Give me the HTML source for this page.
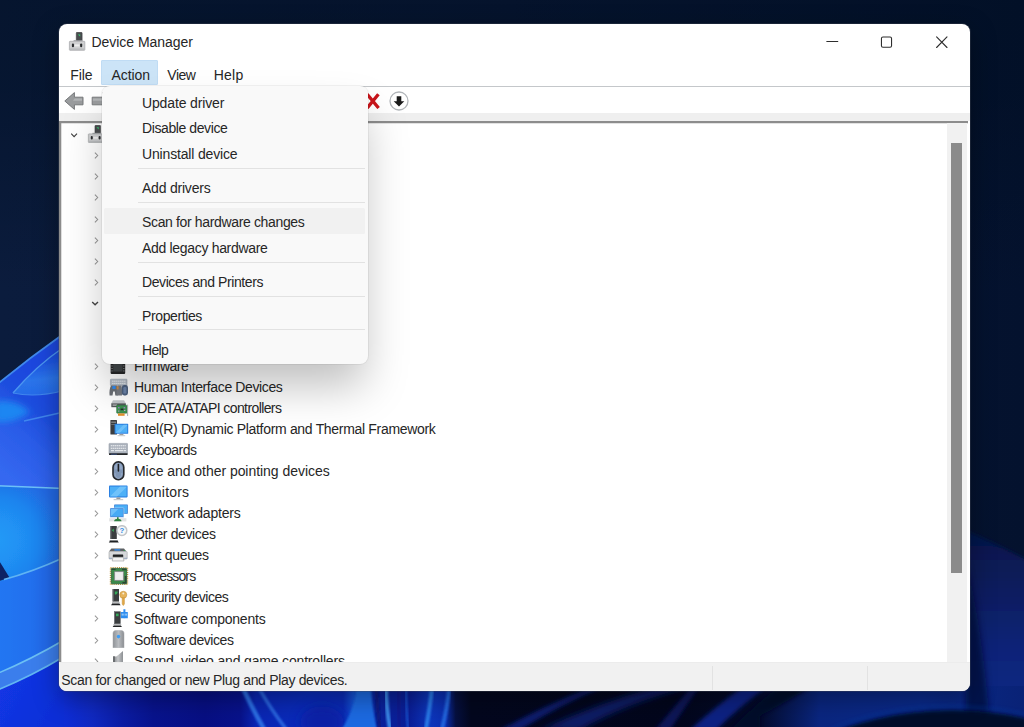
<!DOCTYPE html>
<html lang="en">
<head>
<meta charset="utf-8">
<title>Device Manager</title>
<style>
*{box-sizing:border-box;margin:0;padding:0}
html,body{width:1024px;height:727px;overflow:hidden;background:#081230}
body{font-family:"Liberation Sans",sans-serif;font-size:14px;color:#262626;position:relative}
svg{display:block}
#wall{position:absolute;left:0;top:0;width:1024px;height:727px}
#win{position:absolute;left:59px;top:24px;width:911px;height:667px;background:#fff;border-radius:8px;overflow:hidden;box-shadow:0 0 0 1px rgba(70,75,90,.35),0 8px 26px rgba(0,0,0,.34)}
#title{position:absolute;left:0;top:0;width:100%;height:36px}
#title .ticon{position:absolute}
#title .cap{position:absolute;top:9px;line-height:18px;color:#262626;white-space:nowrap}
#title .capbtn{position:absolute}
#menubar{position:absolute;left:0;top:36px;width:100%;height:26px}
#menubar span{position:absolute;top:6px;line-height:18px;white-space:nowrap;color:#262626}
#menubar .hot{position:absolute;left:42px;top:0;width:57px;height:25px;background:#cce4f7;border:1px solid #c0dcf4;border-radius:1px}
#tbline{position:absolute;left:0;top:62px;width:100%;height:1px;background:#c4c7ca}
#toolbar{position:absolute;left:0;top:63px;width:100%;height:26px;background:#fff}
#toolbar svg{position:absolute}
#band{position:absolute;left:0;top:89px;width:100%;height:8px;background:#efefef}
#tree{position:absolute;left:0;top:96.7px;width:908.5px;height:541.3px;background:#fff;overflow:hidden;box-shadow:inset 2px 2.3px 0 #8c8c8c,inset 2.6px 0 0 #c8c8c8}
.row{position:absolute;left:0;height:21px;width:880px;white-space:nowrap}
.row .chev{position:absolute;top:0}
.row .ico{position:absolute;top:1.5px;width:20px;height:18px}
.row .lbl{position:absolute;top:1.8px;line-height:19px;font-size:14px;color:#262626}
#vscroll{position:absolute;left:888.2px;top:2px;width:19.8px;height:540px;background:#f1f1f1}
#vscroll i{position:absolute;left:4.3px;top:20.5px;width:10.8px;height:429.5px;background:#8b8b8b}
#status{position:absolute;left:0;top:638px;width:100%;height:29px;background:#f1f1f1;border-top:1px solid #ececec}
#status .txt{position:absolute;top:7.5px;line-height:18px;font-size:14px;white-space:nowrap;color:#262626}
#status .dv{position:absolute;top:3px;width:1px;height:24px;background:#e2e2e2}
#menu{position:absolute;left:101.5px;top:85.5px;width:266.5px;height:278.5px;background:#f9f9f9;border-radius:8px;box-shadow:0 0 0 1px rgba(0,0,0,.05),0 26px 44px -4px rgba(0,0,0,.25)}
#menu .mi{position:absolute;line-height:18px;font-size:14px;white-space:nowrap;color:#262626}
#menu .hl{position:absolute;background:#f1f1f1;border-radius:1.5px}
#menu .sep{position:absolute;left:36px;width:227px;height:1px;background:#e2e2e2}

</style>
</head>
<body>
<svg id="wall" viewBox="0 0 1024 727">
<defs>
<linearGradient id="gbg" x1="0" y1="0" x2="1" y2="0"><stop offset="0" stop-color="#0b1c3d"/><stop offset=".5" stop-color="#091838"/><stop offset="1" stop-color="#04122e"/></linearGradient>
<linearGradient id="gtop" x1="0" y1="0" x2="0" y2="1"><stop offset="0" stop-color="#000e20" stop-opacity=".5"/><stop offset=".12" stop-color="#000e20" stop-opacity=".42"/><stop offset=".4" stop-color="#000e20" stop-opacity="0"/></linearGradient>
<linearGradient id="gleft" gradientUnits="userSpaceOnUse" x1="0" y1="330" x2="0" y2="727"><stop offset="0" stop-color="#1a50dc"/><stop offset=".12" stop-color="#1b58e2"/><stop offset=".3" stop-color="#275fe8"/><stop offset=".39" stop-color="#2a62ea"/><stop offset=".41" stop-color="#1c74ea"/><stop offset=".5" stop-color="#1c84f0"/><stop offset=".6" stop-color="#1f8af2"/><stop offset=".64" stop-color="#2468ea"/><stop offset=".8" stop-color="#1f58e6"/><stop offset=".87" stop-color="#1b48e4"/><stop offset=".91" stop-color="#183fe4"/><stop offset="1" stop-color="#183ee4"/></linearGradient>
<linearGradient id="gbot" gradientUnits="userSpaceOnUse" x1="0" y1="0" x2="1024" y2="0"><stop offset="0" stop-color="#1236e4"/><stop offset=".05" stop-color="#1030dc"/><stop offset=".07" stop-color="#0e2cd2"/><stop offset=".09" stop-color="#1029c2"/><stop offset=".12" stop-color="#0b1ca4"/><stop offset=".15" stop-color="#08138e"/><stop offset=".2" stop-color="#070f84"/><stop offset=".235" stop-color="#08128c"/><stop offset=".25" stop-color="#0a26b4"/><stop offset=".3" stop-color="#0a2cbc"/><stop offset=".335" stop-color="#0b2cb8"/><stop offset=".345" stop-color="#1452d4"/><stop offset=".365" stop-color="#0a229c"/><stop offset=".4" stop-color="#0a1e98"/><stop offset=".42" stop-color="#0d36bc"/><stop offset=".435" stop-color="#0b2eb0"/><stop offset=".445" stop-color="#061040"/><stop offset=".46" stop-color="#03071e"/><stop offset=".66" stop-color="#02061c"/><stop offset=".74" stop-color="#030a2a"/><stop offset=".8" stop-color="#0a2680"/><stop offset=".9" stop-color="#0a2a8a"/><stop offset="1" stop-color="#092276"/></linearGradient>
<linearGradient id="gright" gradientUnits="userSpaceOnUse" x1="0" y1="530" x2="0" y2="727"><stop offset="0" stop-color="#06164a"/><stop offset=".25" stop-color="#081c5a"/><stop offset=".6" stop-color="#0a2478"/><stop offset=".8" stop-color="#0a2680"/><stop offset="1" stop-color="#092276"/></linearGradient>
<linearGradient id="gB" gradientUnits="userSpaceOnUse" x1="0" y1="470" x2="60" y2="400"><stop offset="0" stop-color="#3468f0"/><stop offset=".45" stop-color="#2a5ce8"/><stop offset=".75" stop-color="#1e4ede"/><stop offset="1" stop-color="#1a47de"/></linearGradient>
<linearGradient id="gPet" gradientUnits="userSpaceOnUse" x1="40" y1="360" x2="44" y2="395"><stop offset="0" stop-color="#1c50e0"/><stop offset=".55" stop-color="#2a74ea"/><stop offset="1" stop-color="#266ae8"/></linearGradient>
<radialGradient id="gC" gradientUnits="userSpaceOnUse" cx="-4" cy="540" r="72"><stop offset="0" stop-color="#219af6"/><stop offset=".3" stop-color="#2092f4"/><stop offset=".6" stop-color="#1e84ee"/><stop offset=".85" stop-color="#2070e6"/><stop offset="1" stop-color="#2468e4"/></radialGradient>
<linearGradient id="gD" gradientUnits="userSpaceOnUse" x1="0" y1="0" x2="60" y2="0"><stop offset="0" stop-color="#2276f2"/><stop offset=".5" stop-color="#2270ee"/><stop offset="1" stop-color="#2464e4"/></linearGradient>
<linearGradient id="gF" gradientUnits="userSpaceOnUse" x1="0" y1="690" x2="70" y2="727"><stop offset="0" stop-color="#1236e4"/><stop offset="1" stop-color="#0e2cd4"/></linearGradient>
<filter id="b05" x="-20%" y="-20%" width="140%" height="140%"><feGaussianBlur stdDeviation="0.450"/></filter>
<filter id="b1" x="-20%" y="-20%" width="140%" height="140%"><feGaussianBlur stdDeviation="0.9"/></filter>
<filter id="b2" x="-20%" y="-20%" width="140%" height="140%"><feGaussianBlur stdDeviation="2"/></filter>
<filter id="b3" x="-20%" y="-20%" width="140%" height="140%"><feGaussianBlur stdDeviation="3"/></filter>
<filter id="b6" x="-30%" y="-30%" width="160%" height="160%"><feGaussianBlur stdDeviation="6"/></filter>
</defs>
<rect width="1024" height="727" fill="url(#gbg)"/>
<rect width="1024" height="727" fill="url(#gtop)"/>
<!-- right strip -->
<path d="M960 528 Q1000 545 1034 564 L1034 727 L960 727Z" fill="url(#gright)" filter="url(#b2)"/>
<!-- bottom strip -->
<rect x="0" y="686" width="1024" height="41" fill="url(#gbot)"/>
<path d="M243 688 Q252 708 264 729" fill="none" stroke="#2c6ee4" stroke-width="4.500" filter="url(#b1)"/>
<path d="M259 688 Q270 708 286 729" fill="none" stroke="#2a66e0" stroke-width="3.500" filter="url(#b1)"/>
<ellipse cx="322" cy="722" rx="22" ry="16" fill="#081aa0" opacity=".7" filter="url(#b6)"/>
<path d="M356 688 Q356 706 342 729 L377 729 Q372 706 371 688Z" fill="#1c6ae2" filter="url(#b1)"/>
<path d="M376.500 688 Q377 706 380 729" fill="none" stroke="#0a1a80" stroke-width="3.500" filter="url(#b1)"/>
<path d="M386 688 Q386 706 390 729" fill="none" stroke="#3a8ae8" stroke-width="4" filter="url(#b1)"/>
<path d="M398 688 Q398 706 400 729" fill="none" stroke="#0a1c90" stroke-width="6" filter="url(#b2)"/>
<path d="M406 688 Q406 706 408 729" fill="none" stroke="#1a56d4" stroke-width="2" filter="url(#b1)"/>
<path d="M432 688 Q430 706 426 729" fill="none" stroke="#2a7ae8" stroke-width="4" filter="url(#b1)"/>
<path d="M449 688 Q448 704 442 729" fill="none" stroke="#2466de" stroke-width="4" filter="url(#b1)"/>
<path d="M500 730 Q545 705 590 688 L600 688 Q560 705 520 730Z" fill="#0a1c70" filter="url(#b2)"/>
<path d="M540 730 Q600 702 660 686 L690 686 Q620 706 580 730Z" fill="#0a1a66" filter="url(#b3)"/>
<path d="M655 730 Q675 706 692 686 L700 686 Q686 706 670 730Z" fill="#081658" filter="url(#b2)"/>
<path d="M690 730 Q716 706 744 686 L768 686 Q740 706 716 730Z" fill="#0c2284" filter="url(#b2)"/>
<path d="M760 730 L760 716 Q790 700 812 686 L780 686 Q760 700 730 730Z" fill="#030a2a" filter="url(#b2)"/>
<path d="M966 560 Q984 640 990 730 L966 730Z" fill="#04103a" opacity=".75" filter="url(#b3)"/>
<ellipse cx="952" cy="824" rx="200" ry="114" fill="#030a2a" filter="url(#b2)"/>
<ellipse cx="952" cy="824" rx="202" ry="117" fill="none" stroke="#0e3aa4" stroke-width="2" opacity=".6" filter="url(#b2)"/>
<!-- left bloom -->
<g filter="url(#b05)">
<path d="M-5 386 Q28 359 64 333.500 L64 500 L-5 500Z" fill="url(#gB)"/>
<path d="M13 393 Q36 366 64 347 L64 390.500 Q36 398 13 393Z" fill="url(#gPet)"/>
<path d="M-5 402 Q14 398 30 412 Q14 424 -5 422Z" fill="#1f86f2" filter="url(#b3)"/>
<path d="M-5 485.500 Q28 487 64 488.500 L64 590 L-5 590Z" fill="url(#gC)"/>
<path d="M-5 583 Q30 573 64 557.500 L64 680 L-5 680Z" fill="url(#gD)"/>
<path d="M-5 674.500 Q30 660 64 640 L64 700 L-5 700Z" fill="#3a7eec"/>
<path d="M-5 691 Q30 677 64 656.500 L64 730 L-5 730Z" fill="url(#gF)"/>
<path d="M-2 559 L9.500 577.500 L-2 581.500Z" fill="#0d2264"/>
</g>
<path d="M-5 386 Q28 359 64 333.500" fill="none" stroke="#3f88ec" stroke-width="1.800" filter="url(#b05)"/>
<path d="M13 393 Q36 366 64 347" fill="none" stroke="#4c96f0" stroke-width="1.300" filter="url(#b05)"/>
<path d="M13 393 Q36 398 64 390.500" fill="none" stroke="#3f86ee" stroke-width="1.200" filter="url(#b05)"/>
<path d="M24 421 Q42 417 64 412" fill="none" stroke="#3f86ee" stroke-width="1.300" filter="url(#b05)"/>
<path d="M-5 485.500 Q28 487 64 488.500" fill="none" stroke="#6cc0f8" stroke-width="1.500" filter="url(#b05)"/>
<path d="M4 579.500 Q32 572 64 557.500" fill="none" stroke="#60b4f4" stroke-width="1.700" filter="url(#b05)"/>
<path d="M-5 674.500 Q30 660 64 640" fill="none" stroke="#6cc0f4" stroke-width="1.600" filter="url(#b05)"/>
<path d="M-5 691 Q30 677 64 656.500" fill="none" stroke="#62b6f2" stroke-width="1.600" filter="url(#b05)"/>
</svg>

<div id="win">
<div id="title">
<div class="ticon" style="left:9px;top:8px"><svg width="18" height="19" viewBox="0 0 18 19"><rect x="8.3" y="0.3" width="5.8" height="8.6" rx="0.8" fill="#4a4d4f" stroke="#3a3c3e" stroke-width=".6"/>
<path d="M9.8 2.4h2.4v2.2z" fill="#37c871"/>
<rect x="5.6" y="8.2" width="9" height="1.2" fill="#9a9c9e"/>
<rect x="1.4" y="9.3" width="15.4" height="9" rx="0.6" fill="#cfd0d1" stroke="#a9abad" stroke-width=".8"/>
<rect x="1.8" y="16.4" width="14.6" height="1.6" fill="#b9bbbd"/>
<rect x="3.9" y="11.6" width="2.1" height="3.6" rx="1" fill="#2c2e30"/>
<rect x="12.1" y="11.6" width="2.1" height="3.6" rx="1" fill="#2c2e30"/>
<rect x="6.6" y="12.4" width="4.9" height="2" fill="#eeeeee"/></svg></div>
<div class="cap" style="left:32.60px;letter-spacing:-0.029px;margin-left:-0.18px">Device Manager</div>
<svg class="capbtn" style="left:767px;top:11px" width="14" height="14" viewBox="0 0 14 14"><path d="M.8 6.500h11" stroke="#2e2e2e" stroke-width="1.050" fill="none" stroke-linecap="round"/></svg>
<svg class="capbtn" style="left:821px;top:11px" width="14" height="14" viewBox="0 0 14 14"><rect x="1.450" y="1.950" width="10.100" height="10.300" rx="1.500" stroke="#2e2e2e" stroke-width="1.100" fill="none"/></svg>
<svg class="capbtn" style="left:876px;top:11px" width="14" height="14" viewBox="0 0 14 14"><path d="M1.600 1.800l10.400 10.700M12 1.800l-10.400 10.700" stroke="#2e2e2e" stroke-width="1.100" fill="none" stroke-linecap="round"/></svg>
</div>
<div id="menubar"><div class="hot"></div>
<span style="left:11.30px;letter-spacing:-0.121px;margin-left:-0.06px">File</span>
<span style="left:52.10px;letter-spacing:-0.071px;margin-left:0.44px">Action</span>
<span style="left:107.90px;letter-spacing:-0.550px;margin-left:0.46px">View</span>
<span style="left:155.10px;letter-spacing:0.230px;margin-left:-0.38px">Help</span>
</div>
<div id="tbline"></div>
<div id="toolbar">
<svg style="left:5px;top:5.200px" width="20" height="18" viewBox="0 0 20 18"><path d="M.8 9l9.600-8.400v4.600h8.600v7.600h-8.600v4.600z" fill="#9a9c9e" stroke="#77797b" stroke-width="1" stroke-linejoin="round"/><path d="M10.600 6.400h7.400v2.400h-9z" fill="#c3c5c7" opacity=".6"/></svg>
<svg style="left:31.600px;top:5.200px" width="22" height="18" viewBox="-2 0 22 18"><path d="M19.200 9l-9.600-8.400v4.600h-10.400v7.600h10.400v4.600z" fill="#9a9c9e" stroke="#77797b" stroke-width="1" stroke-linejoin="round"/><path d="M-.2 6.400h9.600v2.400h-9.600z" fill="#c3c5c7" opacity=".6"/></svg>
<svg style="left:307.400px;top:5.900px" width="14" height="16" viewBox="0 0 14 16"><path d="M1.200 1.400l11.400 13.600M12.400 1.200l-11.200 13.800" stroke="#c9151b" stroke-width="3.300" fill="none"/></svg>
<svg style="left:330.200px;top:4.200px" width="20" height="20" viewBox="0 0 20 20"><circle cx="10" cy="10" r="9" fill="#fff" stroke="#b2b6ba" stroke-width="1.300"/><path d="M7.700 5.200h4.600v5h3l-5.300 5.200l-5.300-5.200h3z" fill="#1b1b1b"/></svg>

</div>
<div id="band"></div>
<div id="tree">
<div class="row" style="top:3.65px"><svg class="chev" style="left:10px;top:0.7px" width="10" height="21" viewBox="0 0 10 21"><path d="M2.200 8.700l2.900 2.900l2.900-2.900" fill="none" stroke="#3f3f3f" stroke-width="1.150"/></svg><span class="ico" style="left:28.299999999999997px;top:0.65px"><svg width="17.3" height="18.2" viewBox="0 0 18 19"><rect x="8.3" y="0.3" width="5.8" height="8.6" rx="0.8" fill="#4a4d4f" stroke="#3a3c3e" stroke-width=".6"/>
<path d="M9.8 2.4h2.4v2.2z" fill="#37c871"/>
<rect x="5.6" y="8.2" width="9" height="1.2" fill="#9a9c9e"/>
<rect x="1.4" y="9.3" width="15.4" height="9" rx="0.6" fill="#cfd0d1" stroke="#a9abad" stroke-width=".8"/>
<rect x="1.8" y="16.4" width="14.6" height="1.6" fill="#b9bbbd"/>
<rect x="3.9" y="11.6" width="2.1" height="3.6" rx="1" fill="#2c2e30"/>
<rect x="12.1" y="11.6" width="2.1" height="3.6" rx="1" fill="#2c2e30"/>
<rect x="6.6" y="12.4" width="4.9" height="2" fill="#eeeeee"/></svg></span></div>
<div class="row" style="top:24.70px"><svg class="chev" style="left:33px" width="10" height="21" viewBox="0 0 10 21"><path d="M2.900 7.600l2.800 2.900l-2.800 2.900" fill="none" stroke="#979797" stroke-width="1.050"/></svg></div>
<div class="row" style="top:45.75px"><svg class="chev" style="left:33px" width="10" height="21" viewBox="0 0 10 21"><path d="M2.900 7.600l2.800 2.900l-2.800 2.900" fill="none" stroke="#979797" stroke-width="1.050"/></svg></div>
<div class="row" style="top:66.80px"><svg class="chev" style="left:33px" width="10" height="21" viewBox="0 0 10 21"><path d="M2.900 7.600l2.800 2.900l-2.800 2.900" fill="none" stroke="#979797" stroke-width="1.050"/></svg></div>
<div class="row" style="top:87.85px"><svg class="chev" style="left:33px" width="10" height="21" viewBox="0 0 10 21"><path d="M2.900 7.600l2.800 2.900l-2.800 2.900" fill="none" stroke="#979797" stroke-width="1.050"/></svg></div>
<div class="row" style="top:108.90px"><svg class="chev" style="left:33px" width="10" height="21" viewBox="0 0 10 21"><path d="M2.900 7.600l2.800 2.900l-2.800 2.900" fill="none" stroke="#979797" stroke-width="1.050"/></svg></div>
<div class="row" style="top:129.95px"><svg class="chev" style="left:33px" width="10" height="21" viewBox="0 0 10 21"><path d="M2.900 7.600l2.800 2.900l-2.800 2.900" fill="none" stroke="#979797" stroke-width="1.050"/></svg></div>
<div class="row" style="top:151.00px"><svg class="chev" style="left:33px" width="10" height="21" viewBox="0 0 10 21"><path d="M2.900 7.600l2.800 2.900l-2.800 2.900" fill="none" stroke="#979797" stroke-width="1.050"/></svg></div>
<div class="row" style="top:172.05px"><svg class="chev" style="left:31px" width="10" height="21" viewBox="0 0 10 21"><path d="M2.200 8.900l2.900 2.900l2.900-2.900" fill="none" stroke="#444" stroke-width="1.350"/></svg></div>
<div class="row" style="top:235.20px"><svg class="chev" style="left:33px" width="10" height="21" viewBox="0 0 10 21"><path d="M2.900 7.600l2.800 2.900l-2.800 2.900" fill="none" stroke="#979797" stroke-width="1.050"/></svg><span class="ico" style="left:49.3px;top:1.40px"><svg width="20" height="18" viewBox="0 0 20 18"><rect x="2.6" y="1" width="14.6" height="16" rx="1" fill="#262728"/>
<rect x="5.200" y="2.800" width="9.400" height="11.800" fill="#43484a"/>
<g fill="#6f7274"><rect x="3.200" y="3.200" width="1.600" height="1.100"/><rect x="3.200" y="5.800" width="1.600" height="1.100"/><rect x="3.200" y="8.400" width="1.600" height="1.100"/><rect x="3.200" y="11" width="1.600" height="1.100"/><rect x="3.200" y="13.400" width="1.600" height="1.100"/>
<rect x="15" y="3.200" width="1.600" height="1.100"/><rect x="15" y="5.800" width="1.600" height="1.100"/><rect x="15" y="8.400" width="1.600" height="1.100"/><rect x="15" y="11" width="1.600" height="1.100"/><rect x="15" y="13.400" width="1.600" height="1.100"/></g></svg></span><span class="lbl" style="left:75.00px;top:1.10px;letter-spacing:-0.504px;margin-left:0.00px">Firmware</span></div>
<div class="row" style="top:256.25px"><svg class="chev" style="left:33px" width="10" height="21" viewBox="0 0 10 21"><path d="M2.900 7.600l2.800 2.900l-2.800 2.900" fill="none" stroke="#979797" stroke-width="1.050"/></svg><span class="ico" style="left:50.0px;top:1.25px"><svg width="20" height="18" viewBox="0 0 20 18"><rect x="1.400" y="1.200" width="16.600" height="6.400" rx=".6" fill="#b4bcc6" stroke="#9aa2ac" stroke-width=".6"/>
<g stroke="#eef1f4" stroke-width="1" stroke-dasharray="1.300 .7"><path d="M3.200 3.200h13.200"/><path d="M3.200 5.400h13.200"/></g>
<path d="M.6 17.400c-.4-3.400 0-7 1.400-10h5.800c.7 1.600 1 4 .9 10h-2.400l-.5-4h-1.600l-.7 4z" fill="#6b6f75"/>
<path d="M7.600 17.400c-.3-4 0-7.600 1-10h3.800c.5 2 .7 5 .6 10z" fill="#777b82"/>
<rect x="3.400" y="8" width="3.200" height="3" fill="#2f8af0"/>
<rect x="7.600" y="8.200" width="2" height="3.200" fill="#c98a4a"/>
<rect x="12.800" y="7" width="6.200" height="10.400" rx="2.400" fill="#4d617f"/>
<rect x="14.400" y="9" width="3" height="6.600" rx="1.200" fill="#6b84aa"/></svg></span><span class="lbl" style="left:75.00px;top:1.05px;letter-spacing:-0.381px;margin-left:0.00px">Human Interface Devices</span></div>
<div class="row" style="top:277.30px"><svg class="chev" style="left:33px" width="10" height="21" viewBox="0 0 10 21"><path d="M2.900 7.600l2.800 2.900l-2.800 2.900" fill="none" stroke="#979797" stroke-width="1.050"/></svg><span class="ico" style="left:50.5px;top:1.00px"><svg width="20" height="18" viewBox="0 0 20 18"><path d="M3 1.200h11l1.800 3v3.600h-14.400v-3.600z" fill="#c3c7cb"/>
<rect x="1.400" y="4.400" width="14.400" height="3.800" fill="#55585b"/>
<rect x="2.600" y="5.600" width="4.600" height="1" fill="#cfd1d3"/>
<rect x="6.600" y="6.200" width="10.400" height="8" rx=".6" fill="#3b9150" stroke="#2c7240" stroke-width=".5"/>
<rect x="10.600" y="9.600" width="2.800" height="1.600" fill="#26282a"/><rect x="8" y="8" width="1.600" height="1.400" fill="#9a7ac0"/><rect x="13.600" y="8" width="1.600" height="1.400" fill="#9a7ac0"/><rect x="8" y="11.600" width="1.400" height="1" fill="#c0a0c8"/><rect x="14" y="11" width="1.400" height="1" fill="#c0a0c8"/>
<rect x="8" y="14.400" width="6.600" height="2.400" fill="#e0902c"/>
<rect x="17.200" y="5.600" width=".9" height="11.400" fill="#a4a6a8"/></svg></span><span class="lbl" style="left:75.00px;top:1.00px;letter-spacing:-0.601px;margin-left:0.00px">IDE ATA/ATAPI controllers</span></div>
<div class="row" style="top:298.35px"><svg class="chev" style="left:33px" width="10" height="21" viewBox="0 0 10 21"><path d="M2.900 7.600l2.800 2.900l-2.800 2.900" fill="none" stroke="#979797" stroke-width="1.050"/></svg><span class="ico" style="left:49.8px;top:0.45px"><svg width="20" height="18" viewBox="0 0 20 18"><rect x="1.400" y="1" width="6.600" height="14.600" rx=".6" fill="#3b3d40"/>
<rect x="2.200" y="2.600" width="5" height="1.200" fill="#8c8e90"/><rect x="2.200" y="5" width="5" height="1" fill="#6c6e70"/>
<rect x="5.600" y="4.800" width="13.600" height="10" rx=".6" fill="#2a7fe0"/>
<rect x="6.600" y="5.800" width="11.600" height="8" fill="#4fb0f6"/>
<path d="M6.600 13.800l8-8h3.600v.6l-7.400 7.400z" fill="#7cc8fb" opacity=".7"/>
<rect x="10.400" y="15" width="4" height="1.200" fill="#9a9c9e"/><rect x="8.600" y="16.200" width="7.600" height="1" fill="#c4c6c8"/></svg></span><span class="lbl" style="left:75.00px;top:0.95px;letter-spacing:-0.317px;margin-left:0.00px">Intel(R) Dynamic Platform and Thermal Framework</span></div>
<div class="row" style="top:319.40px"><svg class="chev" style="left:33px" width="10" height="21" viewBox="0 0 10 21"><path d="M2.900 7.600l2.800 2.900l-2.800 2.900" fill="none" stroke="#979797" stroke-width="1.050"/></svg><span class="ico" style="left:49.2px;top:0.40px"><svg width="20" height="18" viewBox="0 0 20 18"><rect x="1" y="3.400" width="18.600" height="10.600" rx=".6" fill="#aab1bb" stroke="#98a0aa" stroke-width=".6"/>
<g stroke="#f2f4f6" stroke-width="1.100" stroke-dasharray="1.500 .5"><path d="M2.800 5.800h15"/><path d="M2.800 8.200h15"/></g>
<path d="M3 10.600h3M7 10.600h8.400M16 10.600h2" stroke="#e4e8ec" stroke-width="1.100"/>
<rect x="1" y="13.200" width="18.600" height="1.800" rx=".5" fill="#26282b"/>
<rect x="3" y="13.800" width="6" height=".7" fill="#3c5a9a"/></svg></span><span class="lbl" style="left:75.00px;top:0.90px;letter-spacing:-0.494px;margin-left:0.00px">Keyboards</span></div>
<div class="row" style="top:340.45px"><svg class="chev" style="left:33px" width="10" height="21" viewBox="0 0 10 21"><path d="M2.900 7.600l2.800 2.900l-2.800 2.900" fill="none" stroke="#979797" stroke-width="1.050"/></svg><span class="ico" style="left:48.7px;top:0.05px"><svg width="20" height="19.6" viewBox="0 0 20 19.6"><rect x="5" y="0.900" width="10.800" height="17.800" rx="5.300" fill="#7f95b4" stroke="#26282c" stroke-width="1.600"/>
<path d="M6.600 8.400c0-4.600 1.600-6.200 3.800-6.200s3.800 1.600 3.800 6.200z" fill="#94a8c6"/>
<path d="M7 12c0 3.600 1.600 5.400 3.400 5.400s3.400-1.800 3.400-5.400" fill="none" stroke="#a9b9d0" stroke-width=".8" opacity=".7"/>
<rect x="9.600" y="2.800" width="1.600" height="8" rx=".8" fill="#1e2024"/></svg></span><span class="lbl" style="left:75.00px;top:0.85px;letter-spacing:-0.041px;margin-left:0.00px">Mice and other pointing devices</span></div>
<div class="row" style="top:361.50px"><svg class="chev" style="left:33px" width="10" height="21" viewBox="0 0 10 21"><path d="M2.900 7.600l2.800 2.900l-2.800 2.900" fill="none" stroke="#979797" stroke-width="1.050"/></svg><span class="ico" style="left:49.0px;top:1.50px"><svg width="20" height="18" viewBox="0 0 20 18"><rect x="1" y="1.600" width="18.600" height="11.800" rx=".8" fill="#2a80e2"/>
<rect x="2" y="2.600" width="16.600" height="9.800" fill="#4db0f7"/>
<path d="M2 12.400l10-9.800h6.600v.4l-9.600 9.400z" fill="#82ccfc" opacity=".65"/>
<rect x="8.400" y="13.400" width="4" height="1.600" fill="#9a9c9e"/><rect x="5.600" y="15" width="9.600" height="1.200" fill="#c8cacc"/></svg></span><span class="lbl" style="left:75.00px;top:0.80px;letter-spacing:0.203px;margin-left:0.00px">Monitors</span></div>
<div class="row" style="top:382.55px"><svg class="chev" style="left:33px" width="10" height="21" viewBox="0 0 10 21"><path d="M2.900 7.600l2.800 2.900l-2.800 2.900" fill="none" stroke="#979797" stroke-width="1.050"/></svg><span class="ico" style="left:49.4px;top:0.35px"><svg width="20" height="18" viewBox="0 0 20 18"><rect x="6.200" y=".4" width="13.600" height="9.400" rx=".5" fill="#2c78d4"/><rect x="7" y="1.200" width="12" height="7.800" fill="#4aaef6"/>
<rect x="2" y="4" width="13.800" height="9.200" rx=".5" fill="#2c78d4" stroke="#e8f2fc" stroke-width=".5"/><rect x="2.900" y="4.900" width="12" height="7.400" fill="#46aaf5"/>
<path d="M2.900 12.300l7.400-7.400h-7.400z" fill="#7cc6fb" opacity=".75"/>
<rect x="1.200" y="14.200" width="17.200" height="3.200" fill="#e2e3e4"/>
<rect x="9" y="13.200" width="1.600" height="2.600" fill="#2e8040"/><path d="M6 17.200c.4-1.600 2-2.400 3.800-2.400s3.400.8 3.800 2.400z" fill="#2e8040"/></svg></span><span class="lbl" style="left:75.00px;top:0.75px;letter-spacing:-0.201px;margin-left:0.00px">Network adapters</span></div>
<div class="row" style="top:403.60px"><svg class="chev" style="left:33px" width="10" height="21" viewBox="0 0 10 21"><path d="M2.900 7.600l2.800 2.900l-2.800 2.900" fill="none" stroke="#979797" stroke-width="1.050"/></svg><span class="ico" style="left:49.0px;top:0.70px"><svg width="20" height="18" viewBox="0 0 20 18"><path d="M2.400 1h6.400v13h-6.400z" fill="#3a3d3f"/><path d="M2.400 1h1v13h-1z" fill="#6f7275"/><path d="M5.800 3.400v3.600l-2-1.800z" fill="#35a85a"/>
<path d="M1.600 15.200h8.200v.8h-8.200z" fill="#8a8d90"/>
<path d="M.8 17.400l1.200-1.600h7.600l1.200 1.600z" fill="#202224"/>
<circle cx="13.900" cy="5.600" r="4.900" fill="#f6f8fa" stroke="#c2c5c8" stroke-width="1.500"/>
<text x="13.900" y="8.300" font-family="Liberation Sans, sans-serif" font-size="7.800" font-weight="bold" fill="#3388e0" text-anchor="middle">?</text></svg></span><span class="lbl" style="left:75.00px;top:0.70px;letter-spacing:-0.373px;margin-left:0.00px">Other devices</span></div>
<div class="row" style="top:424.65px"><svg class="chev" style="left:33px" width="10" height="21" viewBox="0 0 10 21"><path d="M2.900 7.600l2.800 2.900l-2.800 2.900" fill="none" stroke="#979797" stroke-width="1.050"/></svg><span class="ico" style="left:49.2px;top:-0.55px"><svg width="20" height="18" viewBox="0 0 20 18"><path d="M3.400 3.600h12.600l2.400 3h-17.400z" fill="#5d6063"/>
<rect x="6.400" y="4.200" width="5.800" height="1.400" fill="#2f8af0"/>
<rect x="15.800" y="5.200" width="1.400" height=".9" fill="#2fa050"/>
<rect x="1" y="6.400" width="18.200" height="7.600" rx=".8" fill="#d6d8da" stroke="#a2a4a6" stroke-width=".6"/>
<rect x="4.800" y="9.400" width="10.400" height="3" rx=".6" fill="#1e2022"/>
<path d="M5 12.200h10.200l.8 3.800h-11.800z" fill="#f2f2f2" stroke="#9a9c9e" stroke-width=".6"/>
<rect x="1" y="12.800" width="3" height=".8" fill="#8aa0c0"/><rect x="16.200" y="12.800" width="3" height=".8" fill="#8aa0c0"/></svg></span><span class="lbl" style="left:75.00px;top:0.65px;letter-spacing:-0.320px;margin-left:0.00px">Print queues</span></div>
<div class="row" style="top:445.70px"><svg class="chev" style="left:33px" width="10" height="21" viewBox="0 0 10 21"><path d="M2.900 7.600l2.800 2.900l-2.800 2.900" fill="none" stroke="#979797" stroke-width="1.050"/></svg><span class="ico" style="left:49.5px;top:0.20px"><svg width="20" height="18" viewBox="0 0 20 18"><rect x="1.500" y=".600" width="17" height="17" fill="none" stroke="#c9963a" stroke-width="1.400" stroke-dasharray="1 1.130"/>
<rect x="2.300" y="1.400" width="15.400" height="15.400" rx=".6" fill="#3a8a48" stroke="#2a5a32" stroke-width=".8"/>
<path d="M2.600 1.800h4v1.200h-4zM13 1.800h4.400v1.400h-4.400zM15.800 9h1.600v7.400h-4v-1.400h2.400z" fill="#2b3a30" opacity=".85"/>
<rect x="5.400" y="4.400" width="9.200" height="9.200" rx=".8" fill="#e2e3e4" stroke="#7e8082" stroke-width=".8"/>
<rect x="6.600" y="5.600" width="6.800" height="6.800" fill="#eeeeee"/></svg></span><span class="lbl" style="left:75.00px;top:0.60px;letter-spacing:-0.873px;margin-left:0.00px">Processors</span></div>
<div class="row" style="top:466.75px"><svg class="chev" style="left:33px" width="10" height="21" viewBox="0 0 10 21"><path d="M2.900 7.600l2.800 2.900l-2.800 2.900" fill="none" stroke="#979797" stroke-width="1.050"/></svg><span class="ico" style="left:49.4px;top:0.55px"><svg width="20" height="18" viewBox="0 0 20 18"><path d="M4.600 1h6.400v12.600h-6.400z" fill="#3a3d3f"/><path d="M4.600 1h1v12.600h-1z" fill="#73767a"/><path d="M6.800 3.400h2.800v1.600l-1.400 1.400h-1.400z" fill="#35a85a"/>
<path d="M4 14.400h7.600v.9h-7.600z" fill="#8a8d90"/>
<path d="M3 17.200l1.200-1.600h7.200l1.200 1.600z" fill="#202224"/>
<circle cx="15.300" cy="6.800" r="3.500" fill="#e6b45c" stroke="#c7923a" stroke-width=".6"/><circle cx="15.300" cy="5.400" r="1" fill="#f8ecd4"/>
<path d="M14.200 9.800h2.200v6.200l-1.100 1.600l-1.100-1.600z" fill="#e0a848" stroke="#c7923a" stroke-width=".5"/></svg></span><span class="lbl" style="left:75.00px;top:0.55px;letter-spacing:-0.478px;margin-left:0.00px">Security devices</span></div>
<div class="row" style="top:487.80px"><svg class="chev" style="left:33px" width="10" height="21" viewBox="0 0 10 21"><path d="M2.900 7.600l2.800 2.900l-2.800 2.900" fill="none" stroke="#979797" stroke-width="1.050"/></svg><span class="ico" style="left:49.4px;top:0.50px"><svg width="20" height="18" viewBox="0 0 20 18"><path d="M6 2.400h6.600v12.400h-6.600z" fill="#3a3d3f"/><path d="M6 2.400h1v12.400h-1z" fill="#73767a"/><rect x="8" y="4.600" width="2.600" height="2.600" fill="#35a85a"/>
<path d="M5.400 15.400h7.800v.8h-7.800z" fill="#8a8d90"/>
<path d="M4.600 18l1.200-1.400h7l1.200 1.400z" fill="#202224"/>
<path d="M12.800 3h2.600v-2.800h2v2.800h2.400v6.200h-7z" fill="#2f8ef0"/>
<rect x="13.600" y="4.600" width="5.400" height="2" fill="#8cc4f8"/><rect x="15.600" y="3" width="1.600" height="6.200" fill="#2f8ef0" opacity=".6"/></svg></span><span class="lbl" style="left:75.00px;top:1.50px;letter-spacing:-0.205px;margin-left:0.00px">Software components</span></div>
<div class="row" style="top:508.85px"><svg class="chev" style="left:33px" width="10" height="21" viewBox="0 0 10 21"><path d="M2.900 7.600l2.800 2.900l-2.800 2.900" fill="none" stroke="#979797" stroke-width="1.050"/></svg><span class="ico" style="left:49.0px;top:0.45px"><svg width="20" height="18" viewBox="0 0 20 18"><defs><linearGradient id="swd" x1="0" y1="0" x2="1" y2="0"><stop offset="0" stop-color="#8f9397"/><stop offset=".5" stop-color="#b9bcc0"/><stop offset="1" stop-color="#8a8d91"/></linearGradient></defs>
<path d="M5 3.400c0-2 1.200-3 3-3h5c1.800 0 3 1 3 3v14.400h-11z" fill="url(#swd)" stroke="#a4a7ab" stroke-width=".5"/>
<circle cx="10.500" cy="6.400" r="1.700" fill="#3d9df5"/><path d="M9 6.400h3l-1.500 2.400z" fill="#3d9df5"/></svg></span><span class="lbl" style="left:75.00px;top:1.45px;letter-spacing:-0.447px;margin-left:0.00px">Software devices</span></div>
<div class="row" style="top:529.90px"><svg class="chev" style="left:33px" width="10" height="21" viewBox="0 0 10 21"><path d="M2.900 7.600l2.800 2.900l-2.800 2.900" fill="none" stroke="#979797" stroke-width="1.050"/></svg><span class="ico" style="left:49.0px;top:-0.60px"><svg width="20" height="18" viewBox="0 0 20 18"><defs><linearGradient id="snd" x1="0" y1="0" x2="1" y2="0"><stop offset="0" stop-color="#7d8084"/><stop offset=".5" stop-color="#c4c6c8"/><stop offset="1" stop-color="#8d9094"/></linearGradient></defs>
<path d="M5 6.400h3.400l6.600-5.400v17h-10z" fill="url(#snd)"/><rect x="5" y="6.400" width="2" height="11.600" fill="#6a6d70"/></svg></span><span class="lbl" style="left:75.00px;top:1.40px;letter-spacing:-0.168px;margin-left:0.00px">Sound, video and game controllers</span></div>
<div id="vscroll"><i></i></div>
</div>
<div id="status"><div class="txt" style="left:2.60px;letter-spacing:-0.328px;margin-left:-0.34px">Scan for changed or new Plug and Play devices.</div><div class="dv" style="left:653px"></div><div class="dv" style="left:808px"></div></div>
</div>
<div id="menu">
<div class="hl" style="left:2.6px;top:122.3px;width:261.1px;height:25.9px"></div>
<span class="mi" style="left:40.50px;top:8.65px;letter-spacing:-0.139px;margin-left:0.00px">Update driver</span>
<span class="mi" style="left:40.50px;top:33.65px;letter-spacing:-0.405px;margin-left:0.00px">Disable device</span>
<span class="mi" style="left:40.50px;top:59.65px;letter-spacing:-0.164px;margin-left:0.00px">Uninstall device</span>
<span class="mi" style="left:40.50px;top:93.65px;letter-spacing:-0.215px;margin-left:0.00px">Add drivers</span>
<span class="mi" style="left:40.50px;top:127.65px;letter-spacing:-0.352px;margin-left:0.00px">Scan for hardware changes</span>
<span class="mi" style="left:40.50px;top:153.65px;letter-spacing:-0.316px;margin-left:0.00px">Add legacy hardware</span>
<span class="mi" style="left:40.50px;top:187.65px;letter-spacing:-0.409px;margin-left:0.00px">Devices and Printers</span>
<span class="mi" style="left:40.50px;top:221.65px;letter-spacing:-0.386px;margin-left:0.00px">Properties</span>
<span class="mi" style="left:40.50px;top:255.65px;letter-spacing:-0.637px;margin-left:0.00px">Help</span>
<div class="sep" style="top:82.4px"></div>
<div class="sep" style="top:116.3px"></div>
<div class="sep" style="top:176.2px"></div>
<div class="sep" style="top:210.4px"></div>
<div class="sep" style="top:243.4px"></div>
</div>
</body>
</html>
